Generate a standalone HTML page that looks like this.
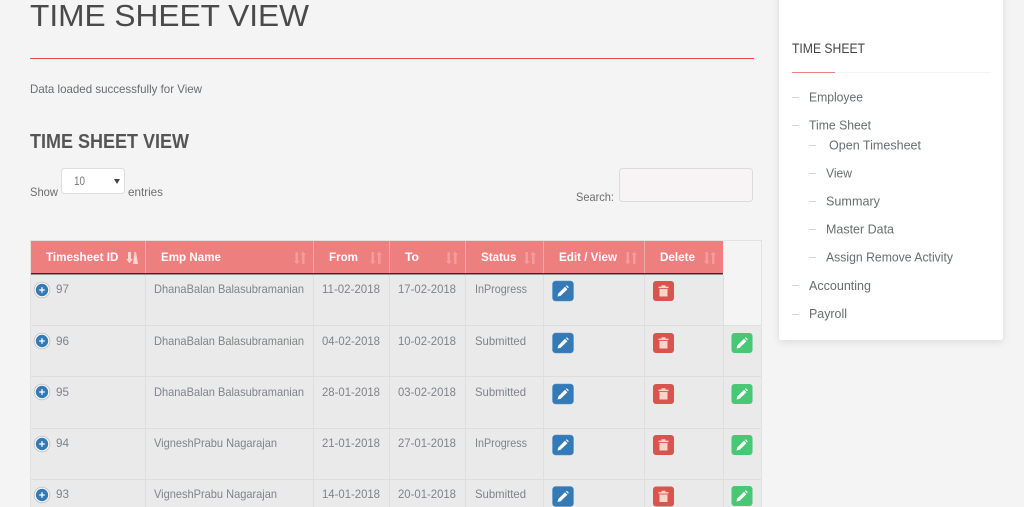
<!DOCTYPE html>
<html><head><meta charset="utf-8"><style>
html,body{margin:0;padding:0;background:#f4f4f4;width:1024px;height:507px;overflow:hidden}
svg{display:block}
text{font-family:"Liberation Sans",sans-serif;fill:#6e6e6e;font-size:12px}
.th{font-weight:bold;fill:#fff;font-size:12px}
.m{fill:#696c72;font-size:13px}
.t{fill:#80838a;font-size:12px}
</style></head><body>
<svg width="1024" height="507" viewBox="0 0 1024 507" xmlns="http://www.w3.org/2000/svg">
<defs>
<filter id="sh" x="-10%" y="-10%" width="120%" height="120%"><feDropShadow dx="0" dy="2" stdDeviation="4" flood-color="#000" flood-opacity="0.1"/></filter>
<g id="pen"><path d="M-5.500 5.500 L-4.800 2.600 L2 -4.200 L4.400 -1.800 L-2.500 4.900 Z M2.900 -5 L3.800 -5.800 L5.800 -3.800 L5 -2.700 Z" fill="#fff"/></g>
<g id="plus"><circle r="7.800" fill="#fff" stroke="#c8c8c8"/><circle r="6.200" fill="#337ab7"/><path d="M-2.800 0H2.800M0 -2.800V2.800" stroke="#fff" stroke-width="1.300"/></g>
<g id="edit"><rect x="-10.500" y="-10" width="21" height="20" rx="3" fill="#337ab7" stroke="#5b93c4" stroke-width=".5"/><use href="#pen"/></g>
<g id="ok"><rect x="-10.500" y="-10" width="21" height="20" rx="3" fill="#48c774"/><use href="#pen"/></g>
<g id="del"><rect x="-10.500" y="-10" width="21" height="20" rx="3" fill="#d9534f"/><path d="M-5 -4.400H-2V-5.800H2V-4.400H5V-2.900H-5Z M-4 -2H4V5.500H-4Z" fill="#f8d5c8"/></g>
<g id="sort"><path d="M-4.500 -6H-2V3H-.5L-3.200 6.500L-6 3H-4.500Z M2 6H4.500V-3H6L3.200 -6.500L.5 -3H2Z" fill="#f49c9c"/></g>
</defs>

<!-- heading -->
<text x="30" y="26" style="font-size:31px;fill:#4a4a4a" textLength="279" lengthAdjust="spacingAndGlyphs">TIME SHEET VIEW</text>
<rect x="30" y="58" width="724" height="1" fill="#e8474c"/>
<text x="30" y="93" class="m" style="font-size:12px" textLength="172" lengthAdjust="spacingAndGlyphs">Data loaded successfully for View</text>
<text x="30" y="148" style="font-size:20.500px;font-weight:bold;fill:#555" textLength="159" lengthAdjust="spacingAndGlyphs">TIME SHEET VIEW</text>

<!-- controls -->
<text x="30" y="196" textLength="28" lengthAdjust="spacingAndGlyphs">Show</text>
<rect x="61.500" y="168.500" width="63" height="25" rx="3" fill="#fff" stroke="#ddd"/>
<text x="74" y="185" style="font-size:11.500px;fill:#777" textLength="11" lengthAdjust="spacingAndGlyphs">10</text>
<path d="M114 179H120L117 184Z" fill="#444"/>
<text x="128" y="196" textLength="35" lengthAdjust="spacingAndGlyphs">entries</text>
<text x="576" y="201" textLength="38" lengthAdjust="spacingAndGlyphs">Search:</text>
<rect x="619.500" y="168.500" width="133" height="33" rx="3" fill="#f8f3f4" stroke="#dcdcdc"/>

<!-- table -->
<rect x="30.500" y="240.500" width="731" height="280" fill="#f4f4f4" stroke="#e2e2e2"/>
<rect x="31" y="275" width="692" height="240" fill="#eaeaea"/>
<rect x="723" y="326" width="38" height="190" fill="#eaeaea"/>
<rect x="31" y="241" width="692" height="32" fill="#ee7f7f"/>
<rect x="31" y="273" width="692" height="1.500" fill="#3d2b2b"/>
<g fill="#f3a9a9">
<rect x="145" y="241" width="1" height="32"/><rect x="313" y="241" width="1" height="32"/><rect x="389" y="241" width="1" height="32"/><rect x="465" y="241" width="1" height="32"/><rect x="543" y="241" width="1" height="32"/><rect x="644" y="241" width="1" height="32"/>
</g>
<g fill="#dedede">
<rect x="145" y="275" width="1" height="232"/><rect x="313" y="275" width="1" height="232"/><rect x="389" y="275" width="1" height="232"/><rect x="465" y="275" width="1" height="232"/><rect x="543" y="275" width="1" height="232"/><rect x="644" y="275" width="1" height="232"/><rect x="723" y="275" width="1" height="232"/>
<rect x="31" y="325" width="730" height="1"/><rect x="31" y="376" width="730" height="1"/><rect x="31" y="428" width="730" height="1"/><rect x="31" y="479" width="730" height="1"/>
</g>

<text class="th" x="46" y="261" textLength="72.500" lengthAdjust="spacingAndGlyphs">Timesheet ID</text>
<text class="th" x="161" y="261" textLength="60" lengthAdjust="spacingAndGlyphs">Emp Name</text>
<text class="th" x="329" y="261" textLength="29" lengthAdjust="spacingAndGlyphs">From</text>
<text class="th" x="405" y="261" textLength="14" lengthAdjust="spacingAndGlyphs">To</text>
<text class="th" x="481" y="261" textLength="35.500" lengthAdjust="spacingAndGlyphs">Status</text>
<text class="th" x="559" y="261" textLength="58" lengthAdjust="spacingAndGlyphs">Edit / View</text>
<text class="th" x="660" y="261" textLength="35" lengthAdjust="spacingAndGlyphs">Delete</text>

<use href="#sort" x="300" y="258"/>
<use href="#sort" x="376" y="258"/>
<use href="#sort" x="452" y="258"/>
<use href="#sort" x="530" y="258"/>
<use href="#sort" x="631" y="258"/>
<use href="#sort" x="710" y="258"/>
<path d="M128 252h3v7h1.500l-3 4.500l-3 -4.500h1.500z M133 264l1.500 -12h1.500l2 12z" fill="#f9d6d2"/>

<!-- rows -->
<use href="#plus" x="42" y="290"/><text class="t" x="56" y="293" textLength="13" lengthAdjust="spacingAndGlyphs">97</text>
<text class="t" x="154" y="293" textLength="150" lengthAdjust="spacingAndGlyphs">DhanaBalan Balasubramanian</text>
<text class="t" x="322" y="293" textLength="58" lengthAdjust="spacingAndGlyphs">11-02-2018</text>
<text class="t" x="398" y="293" textLength="58" lengthAdjust="spacingAndGlyphs">17-02-2018</text>
<text class="t" x="475" y="293" textLength="52" lengthAdjust="spacingAndGlyphs">InProgress</text>
<use href="#edit" x="563" y="291"/><use href="#del" x="663.500" y="291"/>

<use href="#plus" x="42" y="341"/><text class="t" x="56" y="345" textLength="13" lengthAdjust="spacingAndGlyphs">96</text>
<text class="t" x="154" y="345" textLength="150" lengthAdjust="spacingAndGlyphs">DhanaBalan Balasubramanian</text>
<text class="t" x="322" y="345" textLength="58" lengthAdjust="spacingAndGlyphs">04-02-2018</text>
<text class="t" x="398" y="345" textLength="58" lengthAdjust="spacingAndGlyphs">10-02-2018</text>
<text class="t" x="475" y="345" textLength="51" lengthAdjust="spacingAndGlyphs">Submitted</text>
<use href="#edit" x="563" y="343"/><use href="#del" x="663.500" y="343"/><use href="#ok" x="742" y="343"/>

<use href="#plus" x="42" y="392"/><text class="t" x="56" y="396" textLength="13" lengthAdjust="spacingAndGlyphs">95</text>
<text class="t" x="154" y="396" textLength="150" lengthAdjust="spacingAndGlyphs">DhanaBalan Balasubramanian</text>
<text class="t" x="322" y="396" textLength="58" lengthAdjust="spacingAndGlyphs">28-01-2018</text>
<text class="t" x="398" y="396" textLength="58" lengthAdjust="spacingAndGlyphs">03-02-2018</text>
<text class="t" x="475" y="396" textLength="51" lengthAdjust="spacingAndGlyphs">Submitted</text>
<use href="#edit" x="563" y="394"/><use href="#del" x="663.500" y="394"/><use href="#ok" x="742" y="394"/>

<use href="#plus" x="42" y="444"/><text class="t" x="56" y="447" textLength="13" lengthAdjust="spacingAndGlyphs">94</text>
<text class="t" x="154" y="447" textLength="123" lengthAdjust="spacingAndGlyphs">VigneshPrabu Nagarajan</text>
<text class="t" x="322" y="447" textLength="58" lengthAdjust="spacingAndGlyphs">21-01-2018</text>
<text class="t" x="398" y="447" textLength="58" lengthAdjust="spacingAndGlyphs">27-01-2018</text>
<text class="t" x="475" y="447" textLength="52" lengthAdjust="spacingAndGlyphs">InProgress</text>
<use href="#edit" x="563" y="445"/><use href="#del" x="663.500" y="445"/><use href="#ok" x="742" y="445"/>

<use href="#plus" x="42" y="495"/><text class="t" x="56" y="498" textLength="13" lengthAdjust="spacingAndGlyphs">93</text>
<text class="t" x="154" y="498" textLength="123" lengthAdjust="spacingAndGlyphs">VigneshPrabu Nagarajan</text>
<text class="t" x="322" y="498" textLength="58" lengthAdjust="spacingAndGlyphs">14-01-2018</text>
<text class="t" x="398" y="498" textLength="58" lengthAdjust="spacingAndGlyphs">20-01-2018</text>
<text class="t" x="475" y="498" textLength="51" lengthAdjust="spacingAndGlyphs">Submitted</text>
<use href="#edit" x="563" y="496.500"/><use href="#del" x="663.500" y="496.500"/><use href="#ok" x="742" y="496"/>

<!-- sidebar -->
<rect x="779" y="-10" width="224" height="350" rx="3" fill="#fff" filter="url(#sh)"/>
<text x="792" y="53" style="font-size:13.500px;fill:#444" textLength="73" lengthAdjust="spacingAndGlyphs">TIME SHEET</text>
<rect x="792" y="72" width="199" height="1" fill="#f3f3f3"/>
<rect x="792" y="72" width="43" height="1" fill="#ee7f7f"/>
<g fill="#d4d4d4">
<rect x="792" y="97" width="7" height="1"/><rect x="792" y="125" width="7" height="1"/><rect x="809" y="145" width="7" height="1"/><rect x="809" y="173" width="7" height="1"/><rect x="809" y="201" width="7" height="1"/><rect x="809" y="229" width="7" height="1"/><rect x="809" y="257" width="7" height="1"/><rect x="792" y="285" width="7" height="1"/><rect x="792" y="314" width="7" height="1"/>
</g>
<text class="m" x="809" y="101.500" textLength="54" lengthAdjust="spacingAndGlyphs">Employee</text>
<text class="m" x="809" y="129.500" textLength="62" lengthAdjust="spacingAndGlyphs">Time Sheet</text>
<text class="m" x="829" y="149.500" textLength="92" lengthAdjust="spacingAndGlyphs">Open Timesheet</text>
<text class="m" x="826" y="177.500" textLength="26" lengthAdjust="spacingAndGlyphs">View</text>
<text class="m" x="826" y="205.500" textLength="54" lengthAdjust="spacingAndGlyphs">Summary</text>
<text class="m" x="826" y="233.500" textLength="68" lengthAdjust="spacingAndGlyphs">Master Data</text>
<text class="m" x="826" y="261.500" textLength="127" lengthAdjust="spacingAndGlyphs">Assign Remove Activity</text>
<text class="m" x="809" y="290" textLength="62" lengthAdjust="spacingAndGlyphs">Accounting</text>
<text class="m" x="809" y="318" textLength="38" lengthAdjust="spacingAndGlyphs">Payroll</text>
</svg>
</body></html>
